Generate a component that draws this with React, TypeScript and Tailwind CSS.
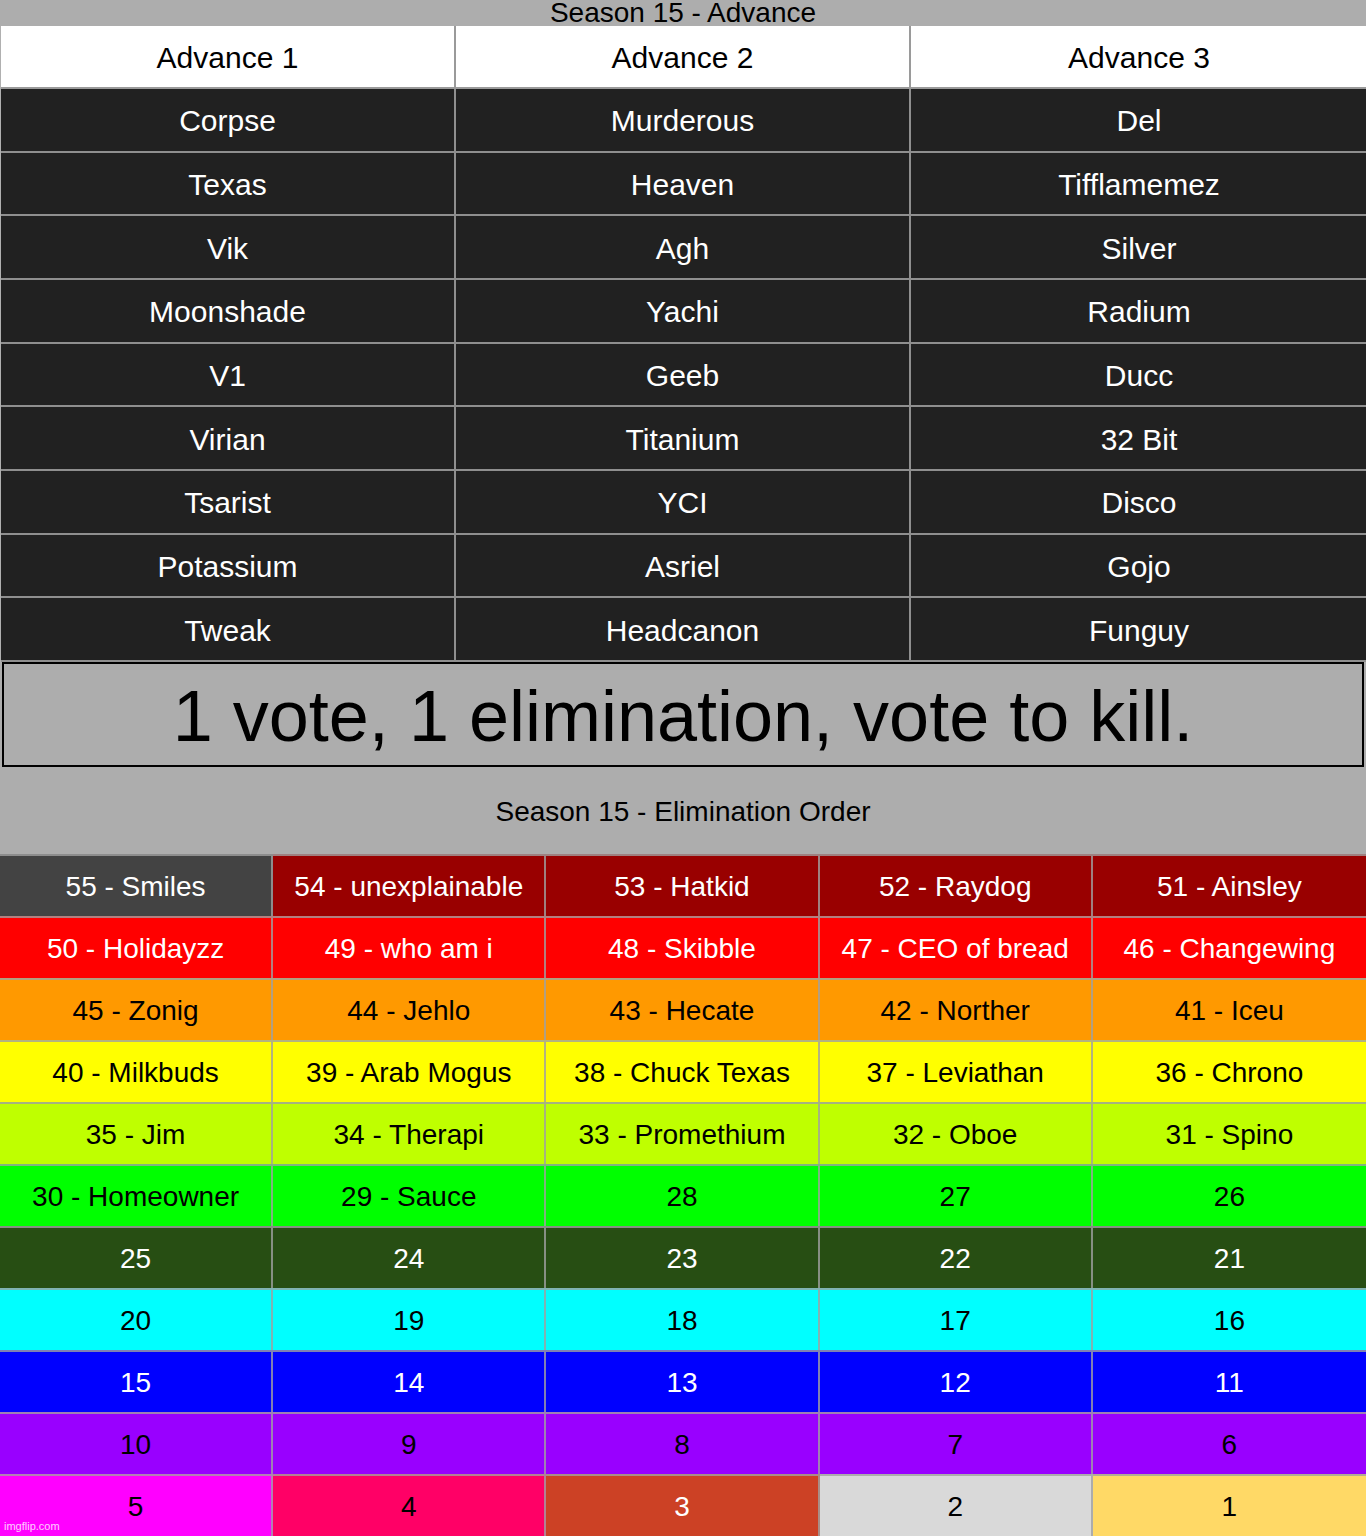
import React from 'react';

const advance: string[][] = [
  ['Corpse', 'Murderous', 'Del'],
  ['Texas', 'Heaven', 'Tifflamemez'],
  ['Vik', 'Agh', 'Silver'],
  ['Moonshade', 'Yachi', 'Radium'],
  ['V1', 'Geeb', 'Ducc'],
  ['Virian', 'Titanium', '32 Bit'],
  ['Tsarist', 'YCI', 'Disco'],
  ['Potassium', 'Asriel', 'Gojo'],
  ['Tweak', 'Headcanon', 'Funguy'],
];

type Cell = { label: string; bg: string; fg: string };

const W = 'text-white';
const B = 'text-black';

// one row per colour band, five cells each
const elimination: Cell[][] = [
  [
    { label: '55 - Smiles', bg: 'bg-[#434343]', fg: W },
    { label: '54 - unexplainable', bg: 'bg-[#990000]', fg: W },
    { label: '53 - Hatkid', bg: 'bg-[#990000]', fg: W },
    { label: '52 - Raydog', bg: 'bg-[#990000]', fg: W },
    { label: '51 - Ainsley', bg: 'bg-[#990000]', fg: W },
  ],
  [
    { label: '50 - Holidayzz', bg: 'bg-[#ff0000]', fg: W },
    { label: '49 - who am i', bg: 'bg-[#ff0000]', fg: W },
    { label: '48 - Skibble', bg: 'bg-[#ff0000]', fg: W },
    { label: '47 - CEO of bread', bg: 'bg-[#ff0000]', fg: W },
    { label: '46 - Changewing', bg: 'bg-[#ff0000]', fg: W },
  ],
  [
    { label: '45 - Zonig', bg: 'bg-[#ff9900]', fg: B },
    { label: '44 - Jehlo', bg: 'bg-[#ff9900]', fg: B },
    { label: '43 - Hecate', bg: 'bg-[#ff9900]', fg: B },
    { label: '42 - Norther', bg: 'bg-[#ff9900]', fg: B },
    { label: '41 - Iceu', bg: 'bg-[#ff9900]', fg: B },
  ],
  [
    { label: '40 - Milkbuds', bg: 'bg-[#ffff00]', fg: B },
    { label: '39 - Arab Mogus', bg: 'bg-[#ffff00]', fg: B },
    { label: '38 - Chuck Texas', bg: 'bg-[#ffff00]', fg: B },
    { label: '37 - Leviathan', bg: 'bg-[#ffff00]', fg: B },
    { label: '36 - Chrono', bg: 'bg-[#ffff00]', fg: B },
  ],
  [
    { label: '35 - Jim', bg: 'bg-[#bfff00]', fg: B },
    { label: '34 - Therapi', bg: 'bg-[#bfff00]', fg: B },
    { label: '33 - Promethium', bg: 'bg-[#bfff00]', fg: B },
    { label: '32 - Oboe', bg: 'bg-[#bfff00]', fg: B },
    { label: '31 - Spino', bg: 'bg-[#bfff00]', fg: B },
  ],
  [
    { label: '30 - Homeowner', bg: 'bg-[#00ff00]', fg: B },
    { label: '29 - Sauce', bg: 'bg-[#00ff00]', fg: B },
    { label: '28', bg: 'bg-[#00ff00]', fg: B },
    { label: '27', bg: 'bg-[#00ff00]', fg: B },
    { label: '26', bg: 'bg-[#00ff00]', fg: B },
  ],
  [
    { label: '25', bg: 'bg-[#274e13]', fg: W },
    { label: '24', bg: 'bg-[#274e13]', fg: W },
    { label: '23', bg: 'bg-[#274e13]', fg: W },
    { label: '22', bg: 'bg-[#274e13]', fg: W },
    { label: '21', bg: 'bg-[#274e13]', fg: W },
  ],
  [
    { label: '20', bg: 'bg-[#00ffff]', fg: B },
    { label: '19', bg: 'bg-[#00ffff]', fg: B },
    { label: '18', bg: 'bg-[#00ffff]', fg: B },
    { label: '17', bg: 'bg-[#00ffff]', fg: B },
    { label: '16', bg: 'bg-[#00ffff]', fg: B },
  ],
  [
    { label: '15', bg: 'bg-[#0000ff]', fg: W },
    { label: '14', bg: 'bg-[#0000ff]', fg: W },
    { label: '13', bg: 'bg-[#0000ff]', fg: W },
    { label: '12', bg: 'bg-[#0000ff]', fg: W },
    { label: '11', bg: 'bg-[#0000ff]', fg: W },
  ],
  [
    { label: '10', bg: 'bg-[#9900ff]', fg: B },
    { label: '9', bg: 'bg-[#9900ff]', fg: B },
    { label: '8', bg: 'bg-[#9900ff]', fg: B },
    { label: '7', bg: 'bg-[#9900ff]', fg: B },
    { label: '6', bg: 'bg-[#9900ff]', fg: B },
  ],
  [
    { label: '5', bg: 'bg-[#ff00ff]', fg: B },
    { label: '4', bg: 'bg-[#ff0066]', fg: B },
    { label: '3', bg: 'bg-[#cc4125]', fg: W },
    { label: '2', bg: 'bg-[#d9d9d9]', fg: B },
    { label: '1', bg: 'bg-[#ffd966]', fg: B },
  ],
];

export default function App() {
  return (
    <div className="relative w-[1366px] h-[1536px] overflow-hidden bg-[#adadad] font-['Liberation_Sans',Arial,sans-serif]">
      {/* Advance title */}
      <div className="h-[26px] overflow-hidden text-center text-[28px] leading-[26px] text-black">
        Season 15 - Advance
      </div>

      {/* Advance table */}
      <div className="grid grid-cols-[455px_455px_456px] border-l border-[#b0b0b0]">
        {['Advance 1', 'Advance 2', 'Advance 3'].map((h, i) => (
          <div
            key={h}
            className={`flex h-[63px] items-center justify-center border-b-2 border-[#9a9a9a] bg-white pt-[2px] text-[30px] text-black ${i < 2 ? 'border-r-2' : ''}`}
          >
            {h}
          </div>
        ))}
        {advance.map((row, r) =>
          row.map((name, i) => (
            <div
              key={`${r}-${i}`}
              className={`flex h-[63.67px] items-center justify-center border-b-2 border-[#8f8f8f] bg-[#212121] pt-[2px] text-[30px] text-white ${i < 2 ? 'border-r-2' : ''}`}
            >
              {name}
            </div>
          ))
        )}
      </div>

      {/* Rules box */}
      <div className="px-[2px]">
        <div className="flex h-[105px] items-center justify-center border-2 border-black bg-[#adadad] pt-[4px] text-[72px] text-black">
          1 vote, 1 elimination, vote to kill.
        </div>
      </div>

      {/* Elimination title */}
      <div className="flex h-[87px] items-center justify-center pt-[4px] text-[28px] text-black">
        Season 15 - Elimination Order
      </div>

      {/* Elimination grid */}
      <div className="grid grid-cols-5">
        {elimination.map((row, r) =>
          row.map((c, i) => (
            <div
              key={`${r}-${i}`}
              className={`flex h-[62px] items-center justify-center border-t-2 border-[#a0a0a0]/80 pt-[2px] text-[28px] ${c.bg} ${c.fg} ${i < 4 ? 'border-r-2' : ''}`}
            >
              {c.label}
            </div>
          ))
        )}
      </div>

      <div className="absolute bottom-[2px] left-[4px] text-[11px] text-white/80">imgflip.com</div>
    </div>
  );
}
